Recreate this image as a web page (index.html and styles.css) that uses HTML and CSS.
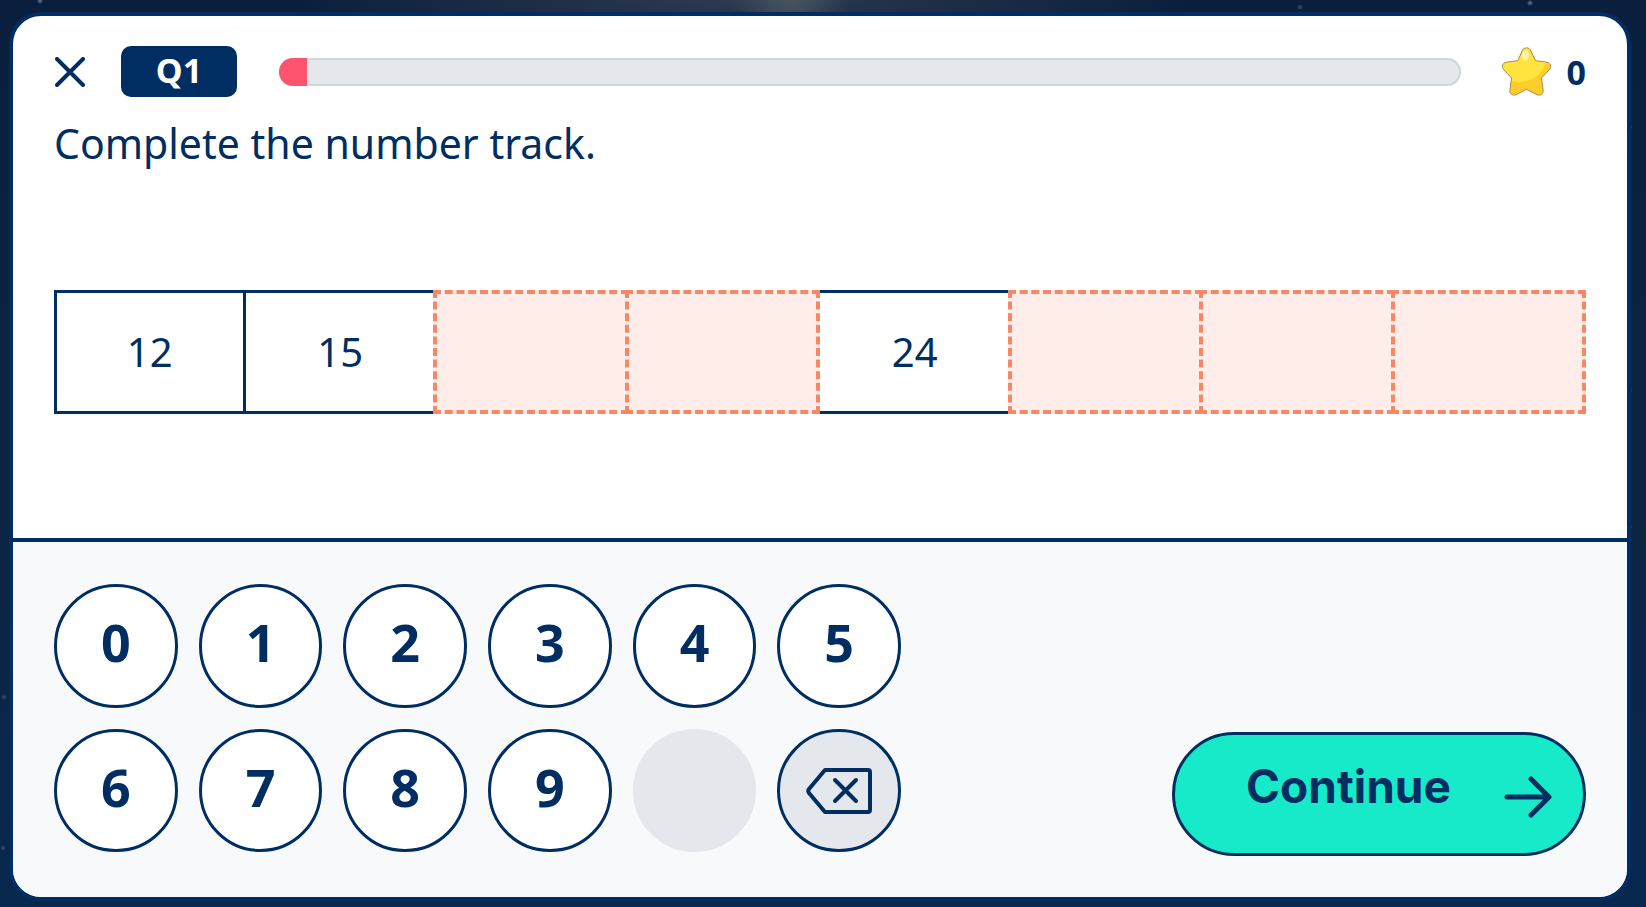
FILE: index.html
```
<!DOCTYPE html>
<html lang="en">
<head>
<meta charset="utf-8">
<title>Number track</title>
<link rel="stylesheet" href="styles.css">
</head>
<body>
<main class="card">
  <section class="question">
    <header class="topbar">
      <button class="close" type="button" aria-label="Close">
        <svg viewBox="0 0 30 30" aria-hidden="true"><path d="M2 2 28 28M28 2 2 28"/></svg>
      </button>
      <span class="badge">Q1</span>
      <div class="progress" role="progressbar" aria-label="Progress" aria-valuenow="2" aria-valuemin="0" aria-valuemax="100"><div class="progress-fill"></div></div>
      <div class="score">
        <svg class="star" viewBox="0 0 49 49" aria-hidden="true">
          <defs><clipPath id="star-shape"><path d="M20.6 3C22.2.1 26.8.1 28.4 3L33.5 13.7 45 15.2C48.4 15.8 49.8 19.8 47.5 22.5L39.4 31 41.2 43.6C41.4 47.2 37.8 49 35 47.7L24.5 42.3 14 47.7C11 49 7.6 47 7.8 43.6L9.6 31 1.5 22.5C-.6 19.8.6 15.8 4 15.3L15.5 13.7Z"/></clipPath></defs>
          <g clip-path="url(#star-shape)">
            <path fill="#ffcd29" d="M0 0H49V49H0Z"/>
            <ellipse cx="19" cy="14" rx="25" ry="21" fill="#ffe43f" transform="rotate(-12 19 14)"/>
          </g>
          <ellipse cx="23.5" cy="8.5" rx="3.6" ry="5" fill="#fff3a6" transform="rotate(12 23.5 8.5)"/>
          <path class="star-edge" d="M20.6 3C22.2.1 26.8.1 28.4 3L33.5 13.7 45 15.2C48.4 15.8 49.8 19.8 47.5 22.5L39.4 31 41.2 43.6C41.4 47.2 37.8 49 35 47.7L24.5 42.3 14 47.7C11 49 7.6 47 7.8 43.6L9.6 31 1.5 22.5C-.6 19.8.6 15.8 4 15.3L15.5 13.7Z"/>
        </svg>
        <span>0</span>
      </div>
    </header>
    <h1 class="prompt">Complete the number track.</h1>
    <div class="track">
      <div class="cell">12</div>
      <div class="cell">15</div>
      <input class="cell blank" type="text" aria-label="Third number">
      <input class="cell blank" type="text" aria-label="Fourth number">
      <div class="cell open">24</div>
      <input class="cell blank" type="text" aria-label="Sixth number">
      <input class="cell blank" type="text" aria-label="Seventh number">
      <input class="cell blank" type="text" aria-label="Eighth number">
    </div>
  </section>
  <section class="panel">
    <div class="keypad">
      <button class="key" type="button">0</button>
      <button class="key" type="button">1</button>
      <button class="key" type="button">2</button>
      <button class="key" type="button">3</button>
      <button class="key" type="button">4</button>
      <button class="key" type="button">5</button>
      <button class="key" type="button">6</button>
      <button class="key" type="button">7</button>
      <button class="key" type="button">8</button>
      <button class="key" type="button">9</button>
      <span class="key key-empty"></span>
      <button class="key key-delete" type="button" aria-label="Delete">
        <svg viewBox="0 0 66 46" aria-hidden="true"><path d="M19 2H62Q64 2 64 4V42Q64 44 62 44H19L3 25Q1.500 23 3 21Z"/><path class="key-cross" d="M29 12 50 33M50 12 29 33"/></svg>
      </button>
    </div>
    <button class="continue" type="button">
      <span class="continue-label">Continue</span>
      <svg viewBox="0 0 48 42" aria-hidden="true"><path d="M3 21H44M27 3 45 21 27 39"/></svg>
    </button>
  </section>
</main>
</body>
</html>
```
FILE: styles.css
```
* {
  box-sizing: border-box;
}

body {
  margin: 0;
  min-height: 100vh;
  padding: 12px 15px 7px 9px;
  display: flex;
  font-family: "Noto Sans", sans-serif;
  color: #002e62;
  background:
    radial-gradient(circle at 99% 14%, #3b4c68 0 1px, transparent 3px),
    radial-gradient(circle at 99% 43%, #34455f 0 1px, transparent 3px),
    radial-gradient(circle at 99% 58%, #3b4c68 0 1px, transparent 3px),
    radial-gradient(circle at 40px 1px, #53657f 0 1px, transparent 3px),
    radial-gradient(circle at 1300px 7px, #34455f 0 1px, transparent 3px),
    radial-gradient(circle at 1530px 3px, #53657f 0 1px, transparent 3px),
    radial-gradient(circle at 4px 697px, #34455f 0 1px, transparent 3px),
    radial-gradient(circle at 3px 848px, #34455f 0 1px, transparent 3px),
    radial-gradient(ellipse 60px 40px at 48% 0, #485560, transparent),
    radial-gradient(ellipse 450px 60px at 45% 0, #2e3a50, transparent),
    linear-gradient(#0a1f3e, #0e2341 55%, #07274e);
}

button {
  font: inherit;
  color: inherit;
  cursor: pointer;
}

svg {
  display: block;
  fill: none;
  stroke: #002e62;
  stroke-linecap: round;
  stroke-linejoin: round;
}

.card {
  flex: 1;
  display: flex;
  flex-direction: column;
  border: 4px solid #002e62;
  border-radius: 32px;
  background: #fff;
  overflow: hidden;
}

.question {
  flex: 1;
  display: flex;
  flex-direction: column;
  padding: 30px 41px 0 41px;
}

.topbar {
  display: flex;
  align-items: center;
}

.close {
  padding: 0 1px;
  border: 0;
  background: none;
}

.close svg {
  width: 30px;
  stroke-width: 4;
}

.badge {
  width: 116px;
  margin-left: 35px;
  padding-bottom: 2px;
  border-radius: 10px;
  background: #002e62;
  color: #fff;
  font-size: 34px;
  font-weight: 700;
  line-height: 49px;
  text-align: center;
}

.progress {
  flex: 1;
  height: 28px;
  margin: 0 41px 0 42px;
  border-radius: 14px;
  background: #e4e8ed;
  box-shadow: inset 0 0 0 2px #d0d6dc;
  overflow: hidden;
}

.progress-fill {
  width: 28px;
  height: 100%;
  background: #ff5470;
}

.score {
  display: flex;
  align-items: center;
  gap: 16px;
  font-size: 34px;
  font-weight: 700;
  line-height: 48px;
}

.star {
  width: 49px;
  stroke: none;
}

.star-edge {
  stroke: #b18a4a;
  stroke-width: 1;
}

.prompt {
  margin: 18px 0 0;
  font-size: 41px;
  font-weight: 400;
  line-height: 56px;
}

.track {
  display: grid;
  grid-template-columns: repeat(8, 1fr);
  margin: 119px 0 124px;
}

.cell {
  height: 124px;
  min-width: 0;
  border: 3px solid #002e62;
  border-left-width: 0;
  font-size: 40px;
  line-height: 118px;
  text-align: center;
}

.cell:first-child {
  border-left-width: 3px;
}

.cell:nth-child(2),
.open {
  padding-right: 2px;
  border-right-width: 0;
}

.blank {
  margin-left: -4px;
  padding: 0;
  border: 4px dashed #f68868;
  border-radius: 0;
  background: #ffede9;
  color: inherit;
  font-family: inherit;
}

.panel {
  display: flex;
  justify-content: space-between;
  align-items: flex-end;
  padding: 42px 41px 41px 41px;
  border-top: 4px solid #002e62;
  background: #f7f9fb;
}

.keypad {
  width: 847px;
  display: grid;
  grid-template-columns: repeat(6, 1fr);
  gap: 21px;
  margin-bottom: 4px;
}

.key {
  aspect-ratio: 1;
  display: flex;
  align-items: center;
  justify-content: center;
  padding: 0 0 8px;
  border: 3px solid #002e62;
  border-radius: 50%;
  background: #fff;
  font-size: 52px;
  font-weight: 700;
}

.key-empty {
  border-color: #e4e8ed;
  background: #e4e8ed;
}

.key-delete {
  padding: 0;
  background: #e4e8ed;
}

.key-delete svg {
  width: 66px;
  stroke-width: 4;
}

.continue {
  width: 414px;
  height: 124px;
  display: flex;
  align-items: center;
  justify-content: space-between;
  padding: 0 31px 0 71px;
  border: 3px solid #002e62;
  border-radius: 62px;
  background: #17eac8;
}

.continue svg {
  width: 48px;
  margin-top: 6px;
  stroke-width: 5;
}

.continue-label {
  padding-bottom: 16px;
  font-family: Inter, sans-serif;
  font-size: 46px;
  font-weight: 700;
}
```
